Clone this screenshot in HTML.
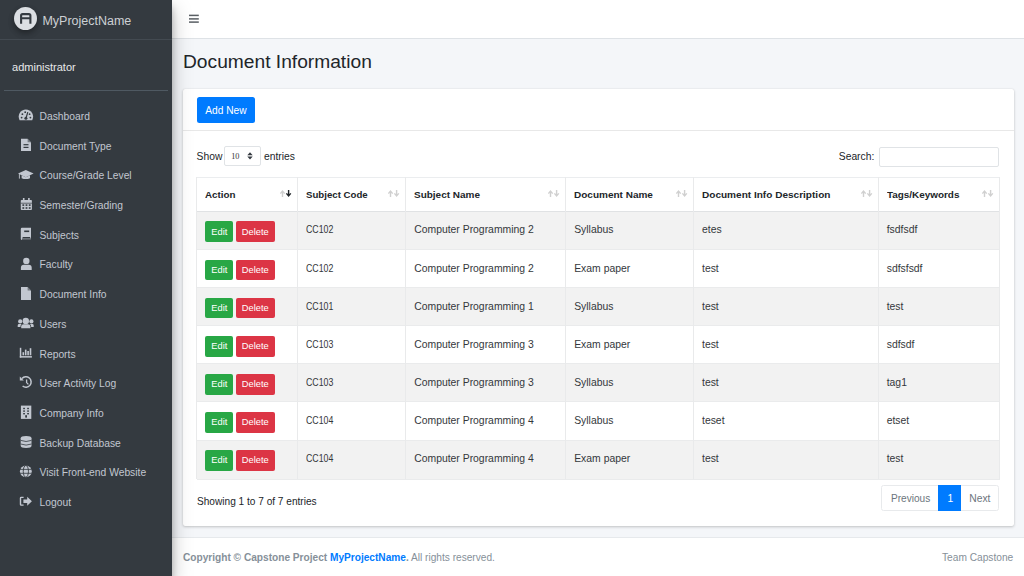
<!DOCTYPE html>
<html><head><meta charset="utf-8"><style>
*{box-sizing:border-box;margin:0;padding:0}
html,body{width:1024px;height:576px;overflow:hidden;background:#f4f6f9;font-family:"Liberation Sans",sans-serif;color:#212529}
.t{position:absolute;white-space:nowrap}
.b{position:absolute}
</style></head><body>
<div class="b" style="left:172px;top:0;width:852px;height:39px;background:#fff;border-bottom:1px solid #dee2e6"></div>
<svg class="b" style="left:189px;top:14px" width="10" height="10" viewBox="0 0 10 10"><rect x="0" y="0.65" width="9.8" height="1.5" fill="#5a5f64"/><rect x="0" y="4.15" width="9.8" height="1.5" fill="#5a5f64"/><rect x="0" y="7.35" width="9.8" height="1.5" fill="#5a5f64"/></svg>
<div class="t" style="left:183.30px;top:52.67px;font-size:18.7px;line-height:18.7px;color:#212529;font-weight:400;transform:scaleX(1.027);transform-origin:0 0;">Document Information</div>

<div class="b" style="left:183px;top:89px;width:830.6px;height:436.5px;background:#fff;border-radius:2px;box-shadow:0 0 1px rgba(0,0,0,.125),0 1px 3px rgba(0,0,0,.2)"></div>
<div class="b" style="left:183px;top:130px;width:830.6px;height:1px;background:rgba(0,0,0,.09)"></div>
<div class="b" style="left:196.6px;top:97.3px;width:58.3px;height:25.6px;background:#007bff;border-radius:2.5px"></div>
<div class="t" style="left:205.20px;top:106.26px;font-size:10.2px;line-height:10.2px;color:#fff;font-weight:400;">Add New</div>

<div class="t" style="left:196.60px;top:151.68px;font-size:10.3px;line-height:10.3px;color:#212529;font-weight:400;">Show</div>

<div class="b" style="left:224.2px;top:146.1px;width:37px;height:20.2px;border:1px solid #e0e3e6;border-radius:2px;background:#fff"></div>
<div class="t" style="left:231.2px;top:152.8px;font-family:'Liberation Serif',serif;font-size:8.3px;line-height:8px;color:#333">10</div>
<svg class="b" style="left:247.2px;top:152.2px" width="6" height="8" viewBox="0 0 6 8"><path d="M0.3 3.2L3 0.3L5.7 3.2Z M0.3 4.6L3 7.5L5.7 4.6Z" fill="#343a40"/></svg>
<div class="t" style="left:264.00px;top:151.68px;font-size:10.3px;line-height:10.3px;color:#212529;font-weight:400;">entries</div>

<div class="t" style="left:838.80px;top:151.68px;font-size:10.3px;line-height:10.3px;color:#212529;font-weight:400;">Search:</div>

<div class="b" style="left:879px;top:146.6px;width:120.4px;height:20px;border:1px solid #e0e3e6;border-radius:2px;background:#fff"></div>
<div class="b" style="left:196.5px;top:211.10px;width:803px;height:38.60px;background:#f2f2f2"></div>
<div class="b" style="left:196.5px;top:287.70px;width:803px;height:38.10px;background:#f2f2f2"></div>
<div class="b" style="left:196.5px;top:363.80px;width:803px;height:38.00px;background:#f2f2f2"></div>
<div class="b" style="left:196.5px;top:440.00px;width:803px;height:39.00px;background:#f2f2f2"></div>
<div class="b" style="left:196.5px;top:176.50px;width:803px;height:1px;background:#ebedef"></div>
<div class="b" style="left:196.5px;top:210.60px;width:803px;height:1px;background:#e0e2e4"></div>
<div class="b" style="left:196.5px;top:249.20px;width:803px;height:1px;background:#eaebec"></div>
<div class="b" style="left:196.5px;top:287.20px;width:803px;height:1px;background:#eaebec"></div>
<div class="b" style="left:196.5px;top:325.30px;width:803px;height:1px;background:#eaebec"></div>
<div class="b" style="left:196.5px;top:363.30px;width:803px;height:1px;background:#eaebec"></div>
<div class="b" style="left:196.5px;top:401.30px;width:803px;height:1px;background:#eaebec"></div>
<div class="b" style="left:196.5px;top:439.50px;width:803px;height:1px;background:#eaebec"></div>
<div class="b" style="left:196.5px;top:478.50px;width:803px;height:1px;background:#eaebec"></div>
<div class="b" style="left:196.00px;top:176.5px;width:1px;height:302.00px;background:#e9eaeb"></div>
<div class="b" style="left:297.00px;top:176.5px;width:1px;height:302.00px;background:#e9eaeb"></div>
<div class="b" style="left:405.10px;top:176.5px;width:1px;height:302.00px;background:#e9eaeb"></div>
<div class="b" style="left:565.10px;top:176.5px;width:1px;height:302.00px;background:#e9eaeb"></div>
<div class="b" style="left:692.90px;top:176.5px;width:1px;height:302.00px;background:#e9eaeb"></div>
<div class="b" style="left:877.60px;top:176.5px;width:1px;height:302.00px;background:#e9eaeb"></div>
<div class="b" style="left:999.00px;top:176.5px;width:1px;height:302.00px;background:#e9eaeb"></div>
<div class="t" style="left:205.30px;top:189.86px;font-size:9.5px;line-height:9.5px;color:#212529;font-weight:700;transform:scaleX(1.0313);transform-origin:0 0;">Action</div>

<svg class="b" style="left:280.10px;top:190px" width="12" height="8" viewBox="0 0 12 8"><path d="M2.5 7V1.2M0.3 3.6L2.5 1.1L4.7 3.6" stroke="#d0d0d0" stroke-width="1.4" fill="none"/><path d="M8.6 0V5.8M6.4 3.4L8.6 5.9L10.8 3.4" stroke="#212529" stroke-width="1.4" fill="none"/></svg>
<div class="t" style="left:306.30px;top:189.86px;font-size:9.5px;line-height:9.5px;color:#212529;font-weight:700;transform:scaleX(1.0164);transform-origin:0 0;">Subject Code</div>

<svg class="b" style="left:388.20px;top:190px" width="12" height="8" viewBox="0 0 12 8"><path d="M2.5 7V1.2M0.3 3.6L2.5 1.1L4.7 3.6" stroke="#d0d0d0" stroke-width="1.4" fill="none"/><path d="M8.6 0V5.8M6.4 3.4L8.6 5.9L10.8 3.4" stroke="#d0d0d0" stroke-width="1.4" fill="none"/></svg>
<div class="t" style="left:414.40px;top:189.86px;font-size:9.5px;line-height:9.5px;color:#212529;font-weight:700;transform:scaleX(1.0504);transform-origin:0 0;">Subject Name</div>

<svg class="b" style="left:548.20px;top:190px" width="12" height="8" viewBox="0 0 12 8"><path d="M2.5 7V1.2M0.3 3.6L2.5 1.1L4.7 3.6" stroke="#d0d0d0" stroke-width="1.4" fill="none"/><path d="M8.6 0V5.8M6.4 3.4L8.6 5.9L10.8 3.4" stroke="#d0d0d0" stroke-width="1.4" fill="none"/></svg>
<div class="t" style="left:574.40px;top:189.86px;font-size:9.5px;line-height:9.5px;color:#212529;font-weight:700;transform:scaleX(1.0525);transform-origin:0 0;">Document Name</div>

<svg class="b" style="left:676.00px;top:190px" width="12" height="8" viewBox="0 0 12 8"><path d="M2.5 7V1.2M0.3 3.6L2.5 1.1L4.7 3.6" stroke="#d0d0d0" stroke-width="1.4" fill="none"/><path d="M8.6 0V5.8M6.4 3.4L8.6 5.9L10.8 3.4" stroke="#d0d0d0" stroke-width="1.4" fill="none"/></svg>
<div class="t" style="left:702.20px;top:189.86px;font-size:9.5px;line-height:9.5px;color:#212529;font-weight:700;transform:scaleX(1.0578);transform-origin:0 0;">Document Info Description</div>

<svg class="b" style="left:860.70px;top:190px" width="12" height="8" viewBox="0 0 12 8"><path d="M2.5 7V1.2M0.3 3.6L2.5 1.1L4.7 3.6" stroke="#d0d0d0" stroke-width="1.4" fill="none"/><path d="M8.6 0V5.8M6.4 3.4L8.6 5.9L10.8 3.4" stroke="#d0d0d0" stroke-width="1.4" fill="none"/></svg>
<div class="t" style="left:886.90px;top:189.86px;font-size:9.5px;line-height:9.5px;color:#212529;font-weight:700;transform:scaleX(1.0419);transform-origin:0 0;">Tags/Keywords</div>

<svg class="b" style="left:982.10px;top:190px" width="12" height="8" viewBox="0 0 12 8"><path d="M2.5 7V1.2M0.3 3.6L2.5 1.1L4.7 3.6" stroke="#d0d0d0" stroke-width="1.4" fill="none"/><path d="M8.6 0V5.8M6.4 3.4L8.6 5.9L10.8 3.4" stroke="#d0d0d0" stroke-width="1.4" fill="none"/></svg>
<div class="b" style="left:205.3px;top:221.00px;width:27.9px;height:20.9px;background:#28a745;border-radius:2px"></div>
<div class="b" style="left:235.8px;top:221.00px;width:38.8px;height:20.9px;background:#dc3545;border-radius:2px"></div>
<div class="t" style="left:211.30px;top:227.53px;font-size:9.3px;line-height:9.3px;color:#fff;font-weight:400;">Edit</div>

<div class="t" style="left:241.80px;top:227.53px;font-size:9.3px;line-height:9.3px;color:#fff;font-weight:400;">Delete</div>

<div class="t" style="left:306.20px;top:225.19px;font-size:10.4px;line-height:10.4px;color:#34373b;font-weight:400;transform:scaleX(0.845);transform-origin:0 0;">CC102</div>

<div class="t" style="left:414.20px;top:225.19px;font-size:10.4px;line-height:10.4px;color:#34373b;font-weight:400;">Computer Programming 2</div>

<div class="t" style="left:574.20px;top:225.19px;font-size:10.4px;line-height:10.4px;color:#34373b;font-weight:400;">Syllabus</div>

<div class="t" style="left:702.00px;top:225.19px;font-size:10.4px;line-height:10.4px;color:#34373b;font-weight:400;">etes</div>

<div class="t" style="left:886.70px;top:225.19px;font-size:10.4px;line-height:10.4px;color:#34373b;font-weight:400;">fsdfsdf</div>

<div class="b" style="left:205.3px;top:259.60px;width:27.9px;height:20.9px;background:#28a745;border-radius:2px"></div>
<div class="b" style="left:235.8px;top:259.60px;width:38.8px;height:20.9px;background:#dc3545;border-radius:2px"></div>
<div class="t" style="left:211.30px;top:266.13px;font-size:9.3px;line-height:9.3px;color:#fff;font-weight:400;">Edit</div>

<div class="t" style="left:241.80px;top:266.13px;font-size:9.3px;line-height:9.3px;color:#fff;font-weight:400;">Delete</div>

<div class="t" style="left:306.20px;top:263.79px;font-size:10.4px;line-height:10.4px;color:#34373b;font-weight:400;transform:scaleX(0.845);transform-origin:0 0;">CC102</div>

<div class="t" style="left:414.20px;top:263.79px;font-size:10.4px;line-height:10.4px;color:#34373b;font-weight:400;">Computer Programming 2</div>

<div class="t" style="left:574.20px;top:263.79px;font-size:10.4px;line-height:10.4px;color:#34373b;font-weight:400;">Exam paper</div>

<div class="t" style="left:702.00px;top:263.79px;font-size:10.4px;line-height:10.4px;color:#34373b;font-weight:400;">test</div>

<div class="t" style="left:886.70px;top:263.79px;font-size:10.4px;line-height:10.4px;color:#34373b;font-weight:400;">sdfsfsdf</div>

<div class="b" style="left:205.3px;top:297.60px;width:27.9px;height:20.9px;background:#28a745;border-radius:2px"></div>
<div class="b" style="left:235.8px;top:297.60px;width:38.8px;height:20.9px;background:#dc3545;border-radius:2px"></div>
<div class="t" style="left:211.30px;top:304.13px;font-size:9.3px;line-height:9.3px;color:#fff;font-weight:400;">Edit</div>

<div class="t" style="left:241.80px;top:304.13px;font-size:9.3px;line-height:9.3px;color:#fff;font-weight:400;">Delete</div>

<div class="t" style="left:306.20px;top:301.79px;font-size:10.4px;line-height:10.4px;color:#34373b;font-weight:400;transform:scaleX(0.845);transform-origin:0 0;">CC101</div>

<div class="t" style="left:414.20px;top:301.79px;font-size:10.4px;line-height:10.4px;color:#34373b;font-weight:400;">Computer Programming 1</div>

<div class="t" style="left:574.20px;top:301.79px;font-size:10.4px;line-height:10.4px;color:#34373b;font-weight:400;">Syllabus</div>

<div class="t" style="left:702.00px;top:301.79px;font-size:10.4px;line-height:10.4px;color:#34373b;font-weight:400;">test</div>

<div class="t" style="left:886.70px;top:301.79px;font-size:10.4px;line-height:10.4px;color:#34373b;font-weight:400;">test</div>

<div class="b" style="left:205.3px;top:335.70px;width:27.9px;height:20.9px;background:#28a745;border-radius:2px"></div>
<div class="b" style="left:235.8px;top:335.70px;width:38.8px;height:20.9px;background:#dc3545;border-radius:2px"></div>
<div class="t" style="left:211.30px;top:342.23px;font-size:9.3px;line-height:9.3px;color:#fff;font-weight:400;">Edit</div>

<div class="t" style="left:241.80px;top:342.23px;font-size:9.3px;line-height:9.3px;color:#fff;font-weight:400;">Delete</div>

<div class="t" style="left:306.20px;top:339.89px;font-size:10.4px;line-height:10.4px;color:#34373b;font-weight:400;transform:scaleX(0.845);transform-origin:0 0;">CC103</div>

<div class="t" style="left:414.20px;top:339.89px;font-size:10.4px;line-height:10.4px;color:#34373b;font-weight:400;">Computer Programming 3</div>

<div class="t" style="left:574.20px;top:339.89px;font-size:10.4px;line-height:10.4px;color:#34373b;font-weight:400;">Exam paper</div>

<div class="t" style="left:702.00px;top:339.89px;font-size:10.4px;line-height:10.4px;color:#34373b;font-weight:400;">test</div>

<div class="t" style="left:886.70px;top:339.89px;font-size:10.4px;line-height:10.4px;color:#34373b;font-weight:400;">sdfsdf</div>

<div class="b" style="left:205.3px;top:373.70px;width:27.9px;height:20.9px;background:#28a745;border-radius:2px"></div>
<div class="b" style="left:235.8px;top:373.70px;width:38.8px;height:20.9px;background:#dc3545;border-radius:2px"></div>
<div class="t" style="left:211.30px;top:380.23px;font-size:9.3px;line-height:9.3px;color:#fff;font-weight:400;">Edit</div>

<div class="t" style="left:241.80px;top:380.23px;font-size:9.3px;line-height:9.3px;color:#fff;font-weight:400;">Delete</div>

<div class="t" style="left:306.20px;top:377.89px;font-size:10.4px;line-height:10.4px;color:#34373b;font-weight:400;transform:scaleX(0.845);transform-origin:0 0;">CC103</div>

<div class="t" style="left:414.20px;top:377.89px;font-size:10.4px;line-height:10.4px;color:#34373b;font-weight:400;">Computer Programming 3</div>

<div class="t" style="left:574.20px;top:377.89px;font-size:10.4px;line-height:10.4px;color:#34373b;font-weight:400;">Syllabus</div>

<div class="t" style="left:702.00px;top:377.89px;font-size:10.4px;line-height:10.4px;color:#34373b;font-weight:400;">test</div>

<div class="t" style="left:886.70px;top:377.89px;font-size:10.4px;line-height:10.4px;color:#34373b;font-weight:400;">tag1</div>

<div class="b" style="left:205.3px;top:411.70px;width:27.9px;height:20.9px;background:#28a745;border-radius:2px"></div>
<div class="b" style="left:235.8px;top:411.70px;width:38.8px;height:20.9px;background:#dc3545;border-radius:2px"></div>
<div class="t" style="left:211.30px;top:418.23px;font-size:9.3px;line-height:9.3px;color:#fff;font-weight:400;">Edit</div>

<div class="t" style="left:241.80px;top:418.23px;font-size:9.3px;line-height:9.3px;color:#fff;font-weight:400;">Delete</div>

<div class="t" style="left:306.20px;top:415.89px;font-size:10.4px;line-height:10.4px;color:#34373b;font-weight:400;transform:scaleX(0.845);transform-origin:0 0;">CC104</div>

<div class="t" style="left:414.20px;top:415.89px;font-size:10.4px;line-height:10.4px;color:#34373b;font-weight:400;">Computer Programming 4</div>

<div class="t" style="left:574.20px;top:415.89px;font-size:10.4px;line-height:10.4px;color:#34373b;font-weight:400;">Syllabus</div>

<div class="t" style="left:702.00px;top:415.89px;font-size:10.4px;line-height:10.4px;color:#34373b;font-weight:400;">teset</div>

<div class="t" style="left:886.70px;top:415.89px;font-size:10.4px;line-height:10.4px;color:#34373b;font-weight:400;">etset</div>

<div class="b" style="left:205.3px;top:449.90px;width:27.9px;height:20.9px;background:#28a745;border-radius:2px"></div>
<div class="b" style="left:235.8px;top:449.90px;width:38.8px;height:20.9px;background:#dc3545;border-radius:2px"></div>
<div class="t" style="left:211.30px;top:456.43px;font-size:9.3px;line-height:9.3px;color:#fff;font-weight:400;">Edit</div>

<div class="t" style="left:241.80px;top:456.43px;font-size:9.3px;line-height:9.3px;color:#fff;font-weight:400;">Delete</div>

<div class="t" style="left:306.20px;top:454.09px;font-size:10.4px;line-height:10.4px;color:#34373b;font-weight:400;transform:scaleX(0.845);transform-origin:0 0;">CC104</div>

<div class="t" style="left:414.20px;top:454.09px;font-size:10.4px;line-height:10.4px;color:#34373b;font-weight:400;">Computer Programming 4</div>

<div class="t" style="left:574.20px;top:454.09px;font-size:10.4px;line-height:10.4px;color:#34373b;font-weight:400;">Exam paper</div>

<div class="t" style="left:702.00px;top:454.09px;font-size:10.4px;line-height:10.4px;color:#34373b;font-weight:400;">test</div>

<div class="t" style="left:886.70px;top:454.09px;font-size:10.4px;line-height:10.4px;color:#34373b;font-weight:400;">test</div>

<div class="t" style="left:197.00px;top:496.78px;font-size:10.3px;line-height:10.3px;color:#212529;font-weight:400;transform:scaleX(0.981);transform-origin:0 0;">Showing 1 to 7 of 7 entries</div>

<div class="b" style="left:881.2px;top:485.3px;width:117.9px;height:25.6px;border:1px solid #e8eaec;border-radius:2.5px;background:#fff"></div>
<div class="b" style="left:938px;top:485.3px;width:23px;height:25.6px;background:#007bff"></div>
<div class="t" style="left:890.50px;top:494.28px;font-size:10.3px;line-height:10.3px;color:#6c757d;font-weight:400;transform:scaleX(0.98);transform-origin:0 0;">Previous</div>

<div class="t" style="left:947.50px;top:494.28px;font-size:10.3px;line-height:10.3px;color:#fff;font-weight:400;">1</div>

<div class="t" style="left:969.30px;top:494.28px;font-size:10.3px;line-height:10.3px;color:#6c757d;font-weight:400;">Next</div>

<div class="b" style="left:172px;top:536.7px;width:852px;height:40px;background:#fff;border-top:1px solid #e6e9ec"></div>
<div class="t" style="left:183.00px;top:552.61px;font-size:10.15px;line-height:10.15px;color:#869099;font-weight:400;"><b>Copyright © Capstone Project <span style="color:#007bff">MyProjectName</span>.</b> All rights reserved.</div>

<div class="t" style="left:942.00px;top:552.68px;font-size:10.18px;line-height:10.18px;color:#869099;font-weight:400;">Team Capstone</div>

<div class="b" style="left:0;top:0;width:172px;height:576px;background:#343a40;box-shadow:0 9px 19px rgba(0,0,0,.25),0 7px 7px rgba(0,0,0,.22)"></div>
<div class="b" style="left:0;top:38.5px;width:172px;height:1px;background:#434a51"></div>
<div class="b" style="left:14.1px;top:6.8px;width:23px;height:23px;border-radius:50%;background:#dcdfe3;box-shadow:0 3px 6px rgba(0,0,0,.16),0 3px 6px rgba(0,0,0,.23)"></div>
<svg class="b" style="left:0;top:0" width="40" height="40"><path d="M21.1 23.7V15.6Q21.1 14.1 22.6 14.1H28.9Q30.4 14.1 30.4 15.6V23.7M21.1 18.3H30.4" stroke="#343a40" stroke-width="2.1" fill="none"/></svg>
<div class="t" style="left:42.40px;top:14.52px;font-size:12.5px;line-height:12.5px;color:#cdd0d4;font-weight:400;">MyProjectName</div>

<div class="t" style="left:12.40px;top:62.32px;font-size:11.25px;line-height:11.25px;color:#e8e9eb;font-weight:400;transform:scaleX(0.98);transform-origin:0 0;">administrator</div>

<div class="b" style="left:4px;top:89.5px;width:164px;height:1px;background:#4f5962"></div>
<div class="t" style="left:39.50px;top:111.88px;font-size:10.3px;line-height:10.3px;color:#c2c7d0;font-weight:400;">Dashboard</div>

<div class="t" style="left:39.50px;top:141.59px;font-size:10.3px;line-height:10.3px;color:#c2c7d0;font-weight:400;">Document Type</div>

<div class="t" style="left:39.50px;top:171.30px;font-size:10.3px;line-height:10.3px;color:#c2c7d0;font-weight:400;">Course/Grade Level</div>

<div class="t" style="left:39.50px;top:201.01px;font-size:10.3px;line-height:10.3px;color:#c2c7d0;font-weight:400;">Semester/Grading</div>

<div class="t" style="left:39.50px;top:230.72px;font-size:10.3px;line-height:10.3px;color:#c2c7d0;font-weight:400;">Subjects</div>

<div class="t" style="left:39.50px;top:260.43px;font-size:10.3px;line-height:10.3px;color:#c2c7d0;font-weight:400;">Faculty</div>

<div class="t" style="left:39.50px;top:290.14px;font-size:10.3px;line-height:10.3px;color:#c2c7d0;font-weight:400;">Document Info</div>

<div class="t" style="left:39.50px;top:319.85px;font-size:10.3px;line-height:10.3px;color:#c2c7d0;font-weight:400;">Users</div>

<div class="t" style="left:39.50px;top:349.56px;font-size:10.3px;line-height:10.3px;color:#c2c7d0;font-weight:400;">Reports</div>

<div class="t" style="left:39.50px;top:379.27px;font-size:10.3px;line-height:10.3px;color:#c2c7d0;font-weight:400;">User Activity Log</div>

<div class="t" style="left:39.50px;top:408.98px;font-size:10.3px;line-height:10.3px;color:#c2c7d0;font-weight:400;">Company Info</div>

<div class="t" style="left:39.50px;top:438.69px;font-size:10.3px;line-height:10.3px;color:#c2c7d0;font-weight:400;">Backup Database</div>

<div class="t" style="left:39.50px;top:468.40px;font-size:10.3px;line-height:10.3px;color:#c2c7d0;font-weight:400;">Visit Front-end Website</div>

<div class="t" style="left:39.50px;top:498.11px;font-size:10.3px;line-height:10.3px;color:#c2c7d0;font-weight:400;">Logout</div>

<svg class="b" style="left:0;top:0" width="172" height="576" viewBox="0 0 172 576"><path d="M19.6 120.2A7.2 7.2 0 1 1 32.2 120.2Z" fill="#c2c7d0"/><circle cx="22.4" cy="114.2" r="0.9" fill="#343a40"/><circle cx="21.6" cy="117.6" r="0.9" fill="#343a40"/><circle cx="29.6" cy="114.2" r="0.9" fill="#343a40"/><circle cx="30.4" cy="117.6" r="0.9" fill="#343a40"/><circle cx="25.2" cy="112.2" r="0.9" fill="#343a40"/><path d="M25.9 118.5L27.8 112.2" stroke="#343a40" stroke-width="1.2"/><circle cx="25.9" cy="118.3" r="1.5" fill="#343a40"/><path d="M21 138.8H27.6L31 142.20000000000002V151.0H21Z" fill="#c2c7d0"/><path d="M27.6 138.8V142.20000000000002H31" fill="#343a40" opacity="0.55"/><rect x="23.5" y="144.10000000000002" width="5" height="1.2" fill="#343a40"/><rect x="23.5" y="146.8" width="5" height="1.2" fill="#343a40"/><path d="M18 173.6L25.8 170L33.6 173.6L25.8 177.2Z" fill="#c2c7d0"/><path d="M21.6 175.3V178.2Q25.8 180 30 178.2V175.3L25.8 177.3Z" fill="#c2c7d0"/><rect x="18.9" y="174" width="0.9" height="4.6" fill="#c2c7d0"/><rect x="20.8" y="200" width="11.1" height="10" rx="0.8" fill="#c2c7d0"/><rect x="22.9" y="198" width="1.6" height="3" fill="#c2c7d0"/><rect x="28.1" y="198" width="1.6" height="3" fill="#c2c7d0"/><rect x="20.8" y="202.8" width="11.1" height="0.7" fill="#343a40"/><rect x="22.4" y="204.3" width="1.8" height="1.6" fill="#343a40"/><rect x="22.4" y="207.2" width="1.8" height="1.6" fill="#343a40"/><rect x="25.6" y="204.3" width="1.8" height="1.6" fill="#343a40"/><rect x="25.6" y="207.2" width="1.8" height="1.6" fill="#343a40"/><rect x="28.8" y="204.3" width="1.8" height="1.6" fill="#343a40"/><rect x="28.8" y="207.2" width="1.8" height="1.6" fill="#343a40"/><path d="M22 227.8H31V238.4H22.6Q21.8 238.4 21.8 239.2Q21.8 239.7 22.6 239.7H31V240H21.8Q20.8 240 20.8 239V229Q20.8 227.8 22 227.8Z" fill="#c2c7d0"/><rect x="24.2" y="230.5" width="5" height="1.6" fill="#343a40"/><rect x="22.6" y="237" width="7.6" height="1.2" fill="#343a40"/><circle cx="26.3" cy="260.9" r="3.2" fill="#c2c7d0"/><path d="M20.9 270V267.8Q20.9 264.8 23.9 264.8H28.7Q31.7 264.8 31.7 267.8V270Z" fill="#c2c7d0"/><path d="M21 287H27.6L31 290.4V299.9H21Z" fill="#c2c7d0"/><path d="M27.6 287V290.4H31" fill="#343a40" opacity="0.55"/><circle cx="25.8" cy="320.9" r="3.2" fill="#c2c7d0"/><path d="M21.2 328.2V326.6Q21.2 324.2 23.6 324.2H28Q30.4 324.2 30.4 326.6V328.2Z" fill="#c2c7d0"/><circle cx="20.2" cy="321.4" r="2.1" fill="#c2c7d0"/><circle cx="31.4" cy="321.4" r="2.1" fill="#c2c7d0"/><path d="M17.7 327V325.4Q17.7 324 19.1 324H21.6Q20.4 325 20.4 327Z" fill="#c2c7d0"/><path d="M33.7 327V325.4Q33.7 324 32.3 324H30Q31.2 325 31.2 327Z" fill="#c2c7d0"/><rect x="19.8" y="347.8" width="1.5" height="9.8" fill="#c2c7d0"/><rect x="19.8" y="356.1" width="12.1" height="1.5" fill="#c2c7d0"/><rect x="22.5" y="352.2" width="1.6" height="3.1000000000000227" fill="#c2c7d0"/><rect x="24.9" y="349.6" width="1.6" height="5.699999999999989" fill="#c2c7d0"/><rect x="27.3" y="351.0" width="1.6" height="4.300000000000011" fill="#c2c7d0"/><rect x="29.7" y="348.2" width="1.6" height="7.100000000000023" fill="#c2c7d0"/><path d="M22 378.6A5.2 5.2 0 1 1 22.6 386" stroke="#c2c7d0" stroke-width="1.5" fill="none"/><path d="M19.8 376.4L23.8 380.4H19.8Z" fill="#c2c7d0"/><path d="M26.6 379.6V382.6L28.4 384.4" stroke="#c2c7d0" stroke-width="1.3" fill="none"/><rect x="20.9" y="405.6" width="10.4" height="13.3" fill="#c2c7d0"/><rect x="23.2" y="407.8" width="1.7" height="1.4" fill="#343a40"/><rect x="23.2" y="410.4" width="1.7" height="1.4" fill="#343a40"/><rect x="23.2" y="413" width="1.7" height="1.4" fill="#343a40"/><rect x="27.2" y="407.8" width="1.7" height="1.4" fill="#343a40"/><rect x="27.2" y="410.4" width="1.7" height="1.4" fill="#343a40"/><rect x="27.2" y="413" width="1.7" height="1.4" fill="#343a40"/><rect x="25.2" y="415.2" width="1.8" height="2.4" fill="#343a40"/><path d="M20.7 438.2Q20.7 436 26.1 436Q31.5 436 31.5 438.2V445.8Q31.5 448 26.1 448Q20.7 448 20.7 445.8Z" fill="#c2c7d0"/><path d="M20.7 440.4Q26.1 442.6 31.5 440.4M20.7 444Q26.1 446.2 31.5 444" stroke="#343a40" stroke-width="0.8" fill="none"/><circle cx="25.85" cy="471.35" r="5.9" fill="#c2c7d0"/><ellipse cx="25.85" cy="471.35" rx="2.6" ry="5.9" stroke="#343a40" stroke-width="0.9" fill="none"/><path d="M20 469.4H31.7M20 473.3H31.7" stroke="#343a40" stroke-width="0.8"/><path d="M23.6 497.4H21.2Q20.5 497.4 20.5 498.1V504.4Q20.5 505.1 21.2 505.1H23.6" stroke="#c2c7d0" stroke-width="1.4" fill="none"/><path d="M23.4 499.6H27.2V496.7L31.9 501.25L27.2 505.8V502.9H23.4Z" fill="#c2c7d0"/></svg>
</body></html>
